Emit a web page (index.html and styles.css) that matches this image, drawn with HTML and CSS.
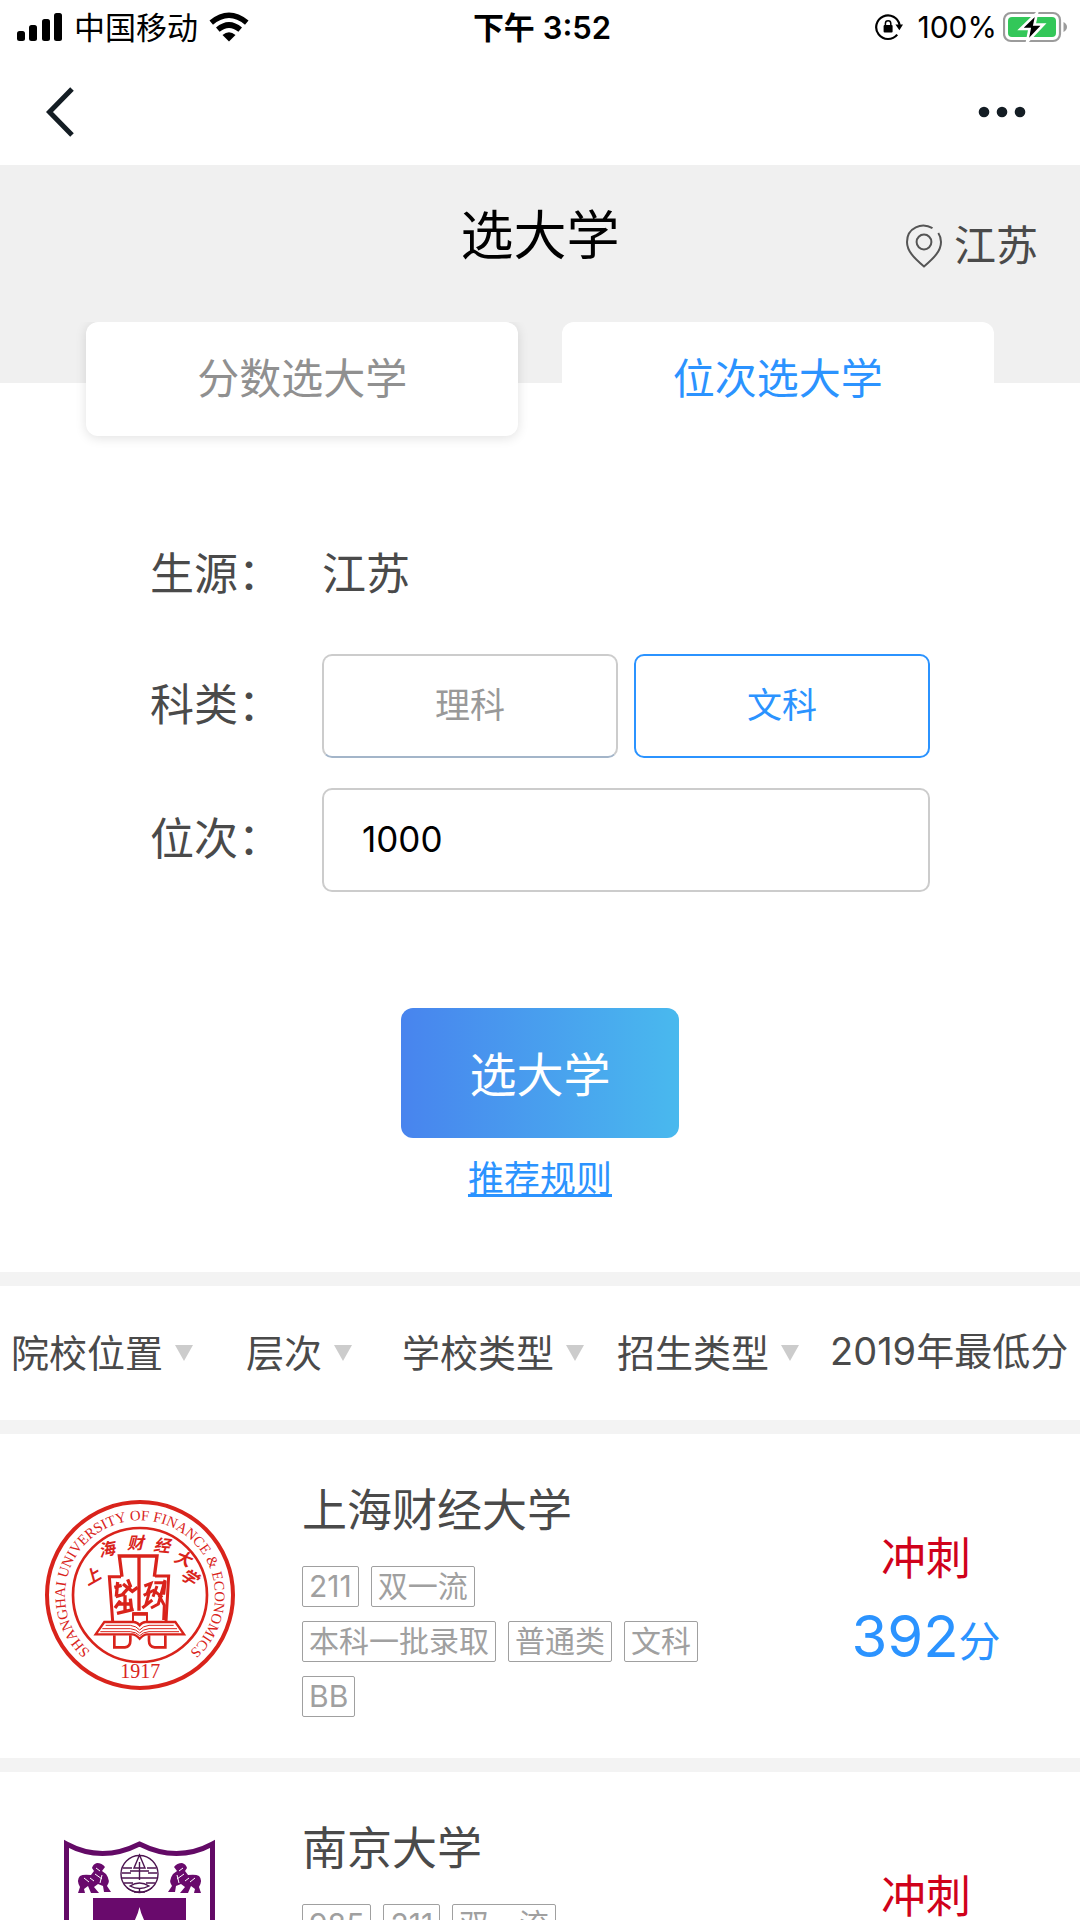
FILE: index.html
```html
<!DOCTYPE html>
<html lang="zh-CN">

<head>
    <meta charset="UTF-8">
    <meta name="viewport" content="width=device-width, initial-scale=1.0">
    <title>选大学</title>
    <link rel="stylesheet" href="styles.css">
</head>

<body>
    <div class="page">
        <!-- 状态栏 -->
        <div class="status">
            <div class="status-left">
                <svg class="signal" width="46" height="28" viewBox="0 0 46 28">
                    <rect x="0" y="18" width="8" height="10" rx="2.5" />
                    <rect x="12" y="12" width="8" height="16" rx="2.5" />
                    <rect x="25" y="6" width="8" height="22" rx="2.5" />
                    <rect x="37" y="0" width="8" height="28" rx="2.5" />
                </svg>
                <span class="status-text">中国移动</span>
                <svg class="wifi" width="40" height="30" viewBox="0 0 40 30">
                    <path d="M0.5 8.5Q20 -7.5 39.5 8.5L36 12.8Q20 -0.6 4 12.8Z" />
                    <path d="M7 15.5Q20 4.5 33 15.5L29.4 19.8Q20 12 10.6 19.8Z" />
                    <path d="M13.5 23Q20 17.4 26.5 23L20 29.6Z" />
                </svg>
            </div>
            <div class="time status-text">下午 3:52</div>
            <div class="status-right">
                <svg width="28" height="28" viewBox="0 0 28 28">
                    <path d="M22.2 21.6A11.8 11.8 0 1 1 24.6 12" fill="none" stroke="#000" stroke-width="2.2" />
                    <path d="M20.4 11.6H28L24.4 17.2Z" />
                    <rect x="8.6" y="12" width="9" height="7.4" rx="1" />
                    <path d="M10.4 12.5V10.4A2.7 2.7 0 0 1 15.8 10.4V12.5" fill="none" stroke="#000" stroke-width="1.5" />
                </svg>
                <span class="percent">100%</span>
                <svg class="battery" width="64" height="32" viewBox="0 0 64 32">
                    <rect x="1" y="2" width="56" height="28" rx="7" fill="none" stroke="#9b9b9b" stroke-width="2.2" />
                    <path d="M60.5 11Q64 13 64 16T60.5 21Z" fill="#9b9b9b" />
                    <rect x="5" y="6" width="48" height="20" rx="4" fill="#33c759" />
                    <path d="M34 2L17.5 18H26.5L24 31L40.5 13.5H31.5Z" stroke="#fff" stroke-width="2.6" />
                </svg>
            </div>
        </div>

        <div class="nav">
            <button class="icon-btn" aria-label="返回">
                <svg width="28" height="50" viewBox="0 0 28 50">
                    <path d="M26 2L3.5 25L26 48" fill="none" stroke="#141d24" stroke-width="5" />
                </svg>
            </button>
            <button class="icon-btn" aria-label="更多">
                <svg width="48" height="12" viewBox="0 0 48 12">
                    <circle cx="6" cy="6" r="5.3" fill="#141d24" />
                    <circle cx="24" cy="6" r="5.3" fill="#141d24" />
                    <circle cx="42" cy="6" r="5.3" fill="#141d24" />
                </svg>
            </button>
        </div>

        <header class="header">
            <h1>选大学</h1>
            <div class="place">
                <svg width="36" height="44" viewBox="0 0 36 44" fill="none" stroke="#555" stroke-width="2">
                    <path d="M26.5 4.2C16 -2 1 3.5 1 18C1 27 8 34 18 42.5C28 34 35 27 35 18C35 14.5 34 11.5 32.3 9" />
                    <circle cx="18" cy="18" r="7.4" />
                </svg>
                <span>江苏</span>
            </div>
        </header>

        <div class="tabs">
            <button class="tab">分数选大学</button>
            <button class="tab current">位次选大学</button>
        </div>

        <form class="form">
            <div class="row source">
                <span class="label">生源：</span>
                <span class="value">江苏</span>
            </div>
            <div class="row">
                <span class="label">科类：</span>
                <div class="subjects">
                    <button type="button" class="subject">理科</button>
                    <button type="button" class="subject current">文科</button>
                </div>
            </div>
            <div class="row">
                <label class="label" for="rank">位次：</label>
                <input class="rank" id="rank" type="text" value="1000">
            </div>
            <button type="button" class="submit">选大学</button>
            <a class="rule" href="#">推荐规则</a>
        </form>

        <!-- 筛选 -->
        <div class="filter">
            <div class="pick"><select aria-label="院校位置"><option>院校位置</option></select></div>
            <div class="pick"><select aria-label="层次"><option>层次</option></select></div>
            <div class="pick"><select aria-label="学校类型"><option>学校类型</option></select></div>
            <div class="pick"><select aria-label="招生类型"><option>招生类型</option></select></div>
            <div class="lowest">2019年最低分</div>
        </div>

        <!-- 学校列表 -->
        <div class="school">
            <svg class="logo" viewBox="44 60 570 570">
                <defs>
                    <path id="ring" d="M174 509A225 225 0 1 1 484 509" />
                </defs>
                <g fill="none" stroke="#d9231b">
                    <circle cx="329" cy="345" r="279" stroke-width="12" />
                    <circle cx="329" cy="345" r="201" stroke-width="8" />
                    <path d="M275 290L267 228H380L372 290M326 230V392" stroke-width="10" />
                    <path d="M272 290H237L247 424M374 288H415L407 424" stroke-width="9" />
                    <path d="M252 466V502H284Q300 500 300 482V466M405 466V502H373Q356 500 356 482V466" stroke-width="8" />
                    <path d="M222 426H310Q320 426 328 436Q336 426 346 426H435L461 463H350Q340 463 328 476Q316 463 306 463H196Z" stroke-width="7" />
                    <path d="M226 436H300Q318 438 328 450Q338 438 356 436H430M216 446H300Q318 448 328 459Q338 448 356 446H440M210 455H300Q318 456 328 467Q338 456 356 455H446" stroke-width="3" />
                    <path d="M252 322L274 316M262 306L258 350M256 350L284 342M278 312L306 334L322 322M292 298L300 318L274 346M262 372H306M284 346V396M254 384L270 362M300 356L304 392M260 400L310 388M308 402H352" stroke-width="10" />
                    <path d="M342 318L362 310L350 342M340 346L372 330M356 340L346 376M336 384L366 360M372 308H404L400 344M380 318L368 350M404 300L384 372L362 384M386 346L402 376L400 420M374 334L396 352" stroke-width="9" />
                    <path d="M308 424V400H350V424" stroke-width="6" />
                </g>
                <g fill="#d9231b">
                    <text class="ring-text" text-anchor="middle"><textPath href="#ring" startOffset="50%">SHANGHAI UNIVERSITY OF FINANCE &amp; ECONOMICS</textPath></text>
                    <text class="year" x="330" y="595" text-anchor="middle">1917</text>
                    <text class="brush" x="172 208 290 368 428 446" y="318 231 207 212 242 292" rotate="-30 -12 0 5 22 34">上海财经大学</text>
                </g>
            </svg>
            <div class="info">
                <h2>上海财经大学</h2>
                <div class="tags"><span>211</span><span>双一流</span></div>
                <div class="tags"><span>本科一批录取</span><span>普通类</span><span>文科</span><span>BB</span></div>
            </div>
            <div class="score">
                <p class="level">冲刺</p>
                <p class="num">392<span>分</span></p>
            </div>
        </div>

        <div class="school">
            <svg class="logo" viewBox="0 -2 190 190">
                <g fill="none" stroke="#630a66">
                    <path d="M21.5 4V110Q22 150 94.5 186Q167 150 167.5 110V4Q132 23 94.5 4Q57 23 21.5 4Z" stroke-width="5" />
                    <g stroke="#4c1450" stroke-width="1.4">
                        <circle cx="94.5" cy="34" r="18.5" />
                        <path d="M94.5 15L89 28H100ZM94.5 22V40M85 31H104M78 28H87M102 28H111M77 33H86M103 33H112M77 38H112M79 43H88M101 43H110M85 46Q94.5 40 104 46Q94.5 51 85 46ZM82 48Q94.5 56 107 48M94.5 49V53M89 52H100" />
                    </g>
                </g>
                <g fill="#690a6c">
                    <g id="lion">
                        <path d="M52 23Q57 23 60 27L57 31L61 34Q66 41 62 46L66 52H59L58 46L53 44L49 47L54 53H46L43 46L39 49L40 53H33L35 47Q31 40 35 36Q38 34 46 35L49 31L47 28Q48 24 52 23Z" />
                        <path d="M51 28L55 31M50 34L57 39M39 38L44 42M57 35L55 43M45 38L49 41" fill="none" stroke="#fff" />
                    </g>
                    <use href="#lion" transform="matrix(-1 0 0 1 189 0)" />
                    <path d="M48 58H141V120Q130 145 94.5 162Q59 145 48 120Z" />
                </g>
                <path d="M94.5 67Q97 80 113 104L124 130H65L76 104Q92 80 94.5 67Z" fill="#fff" />
            </svg>
            <div class="info">
                <h2>南京大学</h2>
                <div class="tags"><span>985</span><span>211</span><span>双一流</span></div>
            </div>
            <div class="score">
                <p class="level">冲刺</p>
            </div>
        </div>
    </div>
</body>

</html>
```
FILE: styles.css
```css
* {
    margin: 0;
    padding: 0;
    box-sizing: border-box;
}

body {
    font-family: Inter, "Noto Sans CJK SC", sans-serif;
    color: #4a4a4a;
    background: #fff;
}

button, input, select {
    font-family: inherit;
    border: none;
    background: none;
    cursor: pointer;
}

svg {
    display: block;
    flex: none;
}

.page {
    height: 100vh;
    overflow: hidden;
}

/* 状态栏 */
.status {
    display: grid;
    grid-template-columns: 1fr auto 1fr;
    align-items: center;
    height: 54px;
    padding: 0 13px 0 17px;
    font-size: 31px;
    color: #000;
}

.status-left {
    display: flex;
    align-items: center;
    gap: 11px;
}

.status-text {
    padding-bottom: 4px;
}

.time {
    font-weight: 600;
}

.status-right {
    display: flex;
    align-items: center;
    justify-content: flex-end;
}

.percent {
    font-size: 30px;
    margin: 0 6px 0 14px;
}

.nav {
    display: flex;
    align-items: center;
    justify-content: space-between;
    height: 111px;
    padding: 4px 54px 0 46px;
}

.icon-btn {
    display: block;
}

/* 标题 */
.header {
    display: grid;
    grid-template-columns: 1fr auto 1fr;
    align-items: end;
    padding: 34px 42px 110px;
    background: #f0f0f0;
}

.header h1 {
    grid-column: 2;
    font-size: 53px;
    font-weight: 400;
    line-height: 74px;
    color: #000;
}

.place {
    display: flex;
    align-items: center;
    justify-content: flex-end;
    gap: 12px;
    font-size: 42px;
    line-height: 54px;
}

.tabs {
    display: grid;
    grid-template-columns: 1fr 1fr;
    gap: 44px;
    margin-top: -61px;
    padding: 0 8%;
}

.tab {
    height: 114px;
    padding-bottom: 8px;
    font-size: 42px;
    color: #909090;
    background: #fff;
    border-radius: 12px;
    box-shadow: 0 2px 12px rgba(0, 0, 0, 0.12);
    clip-path: inset(0 -14px -16px -14px);
}

.tab.current {
    color: #2b93ff;
    box-shadow: none;
}

/* 表单 */
.form {
    display: flex;
    flex-direction: column;
    align-items: center;
    padding: 90px 150px 68px;
    font-size: 44px;
}

.row {
    display: flex;
    align-items: center;
    width: 100%;
    height: 104px;
    margin-bottom: 30px;
}

.row.source {
    height: 98px;
}

.label, .value {
    padding-bottom: 8px;
}

.label {
    flex: none;
    width: 172px;
}

.subjects {
    flex: 1;
    display: grid;
    grid-template-columns: 1fr 1fr;
    gap: 16px;
}

.subject {
    height: 104px;
    padding-bottom: 8px;
    font-size: 35px;
    color: #999;
    background: #fff;
    border: 2px solid #ccc;
    border-bottom-color: #a3b5c9;
    border-radius: 10px;
}

.subject.current {
    color: #2b93ff;
    border-color: #2b93ff;
}

.rank {
    flex: 1;
    min-width: 0;
    height: 104px;
    padding: 0 38px 2px;
    font-size: 35px;
    color: #000;
    border: 2px solid #ccc;
    border-radius: 10px;
}

.submit {
    width: 278px;
    height: 130px;
    margin-top: 86px;
    padding-bottom: 4px;
    font-size: 47px;
    color: #fff;
    border-radius: 12px;
    background: linear-gradient(to right, #4884ee, #49b9ee);
}

.rule {
    margin-top: 16px;
    font-size: 36px;
    line-height: 50px;
    color: #2b93ff;
}

/* 筛选 */
.filter {
    display: grid;
    grid-template-columns: 235fr 156fr 215fr 213fr 240fr;
    align-items: center;
    height: 162px;
    padding: 0 10px 0 11px;
    font-size: 38px;
    border-top: 14px solid #f3f3f3;
    border-bottom: 14px solid #f3f3f3;
    white-space: nowrap;
}

.pick {
    display: flex;
    align-items: center;
    gap: 11px;
}

.pick select {
    appearance: none;
    font-size: 38px;
    color: #4a4a4a;
}

.pick::after {
    content: "";
    border: 9px solid transparent;
    border-top: 16px solid #ccc;
    border-bottom: none;
}

.lowest {
    padding-bottom: 10px;
}

/* 学校 */
.school {
    display: flex;
    align-items: flex-start;
    min-height: 338px;
    padding: 42px 0 41px 45px;
    border-bottom: 14px solid #f3f3f3;
}

.logo {
    width: 190px;
    height: 190px;
    margin: 24px 67px 0 0;
}

.ring-text {
    font-family: "Liberation Serif", serif;
    font-size: 44px;
}

.year {
    font-family: "Liberation Serif", serif;
    font-size: 60px;
}

.brush {
    font-size: 50px;
    font-style: italic;
    font-weight: 700;
}

.info {
    flex: 1;
    padding-right: 50px;
}

.info h2 {
    margin-bottom: 20px;
    font-size: 45px;
    font-weight: 400;
    line-height: 70px;
}

.tags {
    display: flex;
    flex-wrap: wrap;
    gap: 14px 12px;
    margin-bottom: 14px;
}

.tags:last-child {
    margin-bottom: 0;
}

.tags span {
    height: 41px;
    padding: 0 6px;
    font-size: 30px;
    line-height: 38px;
    color: #a0a0a0;
    border: 1px solid #a0a0a0;
    border-radius: 2px;
}

.score {
    width: 308px;
    margin-top: 51px;
    text-align: center;
}

.level {
    font-size: 45px;
    line-height: 64px;
    color: #d0021b;
}

.num {
    font-size: 58px;
    line-height: 90px;
    color: #2b93ff;
}

.num span {
    font-size: 42px;
}
```
